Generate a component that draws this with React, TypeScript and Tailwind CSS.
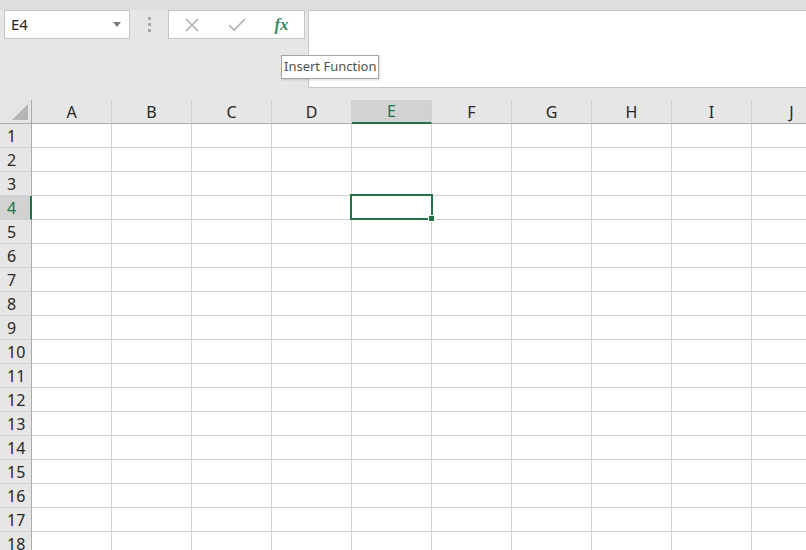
const cols = ["A", "B", "C", "D", "E", "F", "G", "H", "I", "J"];
const rows = Array.from({ length: 18 }, (_, i) => i + 1);

const font = { fontFamily: '"Noto Sans", "Open Sans", sans-serif' };

const App = () => {
  return (
    <div className="w-[806px] h-[550px] overflow-hidden bg-white relative" style={font}>
      {/* formula bar area */}
      <div className="h-[100px] bg-[#e6e6e6] border-t-[10px] border-[#dedede] flex items-start">
        <div className="ml-1 w-[126px] h-[29px] bg-white border border-[#c6c6c6] flex items-center pl-[6px] pr-[8px]">
          <span className="flex-1 text-[15px] text-[#262626]">E4</span>
          <svg width="8" height="5" viewBox="0 0 8 5">
            <path d="M0 0 L8 0 L4 5 Z" fill="#7a7a7a" />
          </svg>
        </div>
        <div className="w-[38px] h-[29px] flex flex-col items-center justify-center gap-[3px]">
          <span className="w-[3px] h-[3px] bg-[#a8a8a8]" />
          <span className="w-[3px] h-[3px] bg-[#a8a8a8]" />
          <span className="w-[3px] h-[3px] bg-[#a8a8a8]" />
        </div>
        <div className="w-[137px] h-[29px] bg-white border border-[#c6c6c6] flex items-center">
          <div className="w-[45px] flex justify-center">
            <svg width="16" height="16" viewBox="0 0 16 16">
              <path d="M2 2 L14 14 M14 2 L2 14" stroke="#a9a9a9" strokeWidth="1.4" />
            </svg>
          </div>
          <div className="w-[45px] flex justify-center">
            <svg width="18" height="16" viewBox="0 0 18 16">
              <path d="M1 8 L6 13 L17 2" stroke="#b0b0b0" strokeWidth="1.6" fill="none" />
            </svg>
          </div>
          <div className="w-[45px] flex justify-center">
            <span className="italic font-bold text-[17px] text-[#3c8c63] leading-none" style={{ fontFamily: '"Liberation Serif", serif' }}>
              fx
            </span>
          </div>
        </div>
        <div className="ml-[3px] flex-1 h-[78px] bg-white border border-r-0 border-[#c6c6c6]" />
      </div>

      {/* tooltip */}
      <div className="absolute left-[281px] top-[55px] h-[24px] px-[2px] bg-white border border-[#a6a6a6] flex items-center text-[13px] text-[#505050] shadow-[1px_1px_2px_rgba(0,0,0,0.15)]">
        Insert Function
      </div>

      {/* grid */}
      <div className="grid grid-cols-[32px_repeat(10,80px)]">
        <div className="h-[24px] bg-[#e6e6e6] border-b border-r border-[#ababab] flex items-end justify-end pr-[3px] pb-[3px]">
          <svg width="16" height="16" viewBox="0 0 16 16">
            <path d="M16 0 L16 16 L0 16 Z" fill="#b4b4b4" />
          </svg>
        </div>
        {cols.map((c) => (
          <div
            key={c}
            className={
              c === "E"
                ? "h-[24px] bg-[#d2d2d2] border-b-2 border-b-[#217346] border-r border-r-[#d0d0d0] flex items-center justify-center text-[16px] text-[#217346]"
                : "h-[24px] bg-[#e6e6e6] border-b border-b-[#ababab] border-r border-r-[#d0d0d0] flex items-center justify-center text-[16px] text-[#262626]"
            }
          >
            {c}
          </div>
        ))}
        {rows.map((r) => (
          <div key={r} className="contents">
            <div
              className={
                r === 4
                  ? "h-[24px] bg-[#d2d2d2] border-b border-b-[#d0d0d0] border-r-2 border-r-[#217346] flex items-center pl-[7px] text-[16px] text-[#217346]"
                  : "h-[24px] bg-[#e6e6e6] border-b border-b-[#d0d0d0] border-r border-r-[#ababab] flex items-center pl-[7px] text-[16px] text-[#262626]"
              }
            >
              {r}
            </div>
            {cols.map((c) => (
              <div key={c} className="h-[24px] border-b border-r border-[#d4d4d4] relative">
                {r === 4 && c === "E" && (
                  <div className="absolute -left-[2px] -top-[2px] -right-[2px] -bottom-[1px] border-2 border-[#217346] z-10">
                    <span className="absolute -right-[4px] -bottom-[4px] w-[5px] h-[5px] bg-[#217346] border border-white box-content" />
                  </div>
                )}
              </div>
            ))}
          </div>
        ))}
      </div>
    </div>
  );
};

export default App;
